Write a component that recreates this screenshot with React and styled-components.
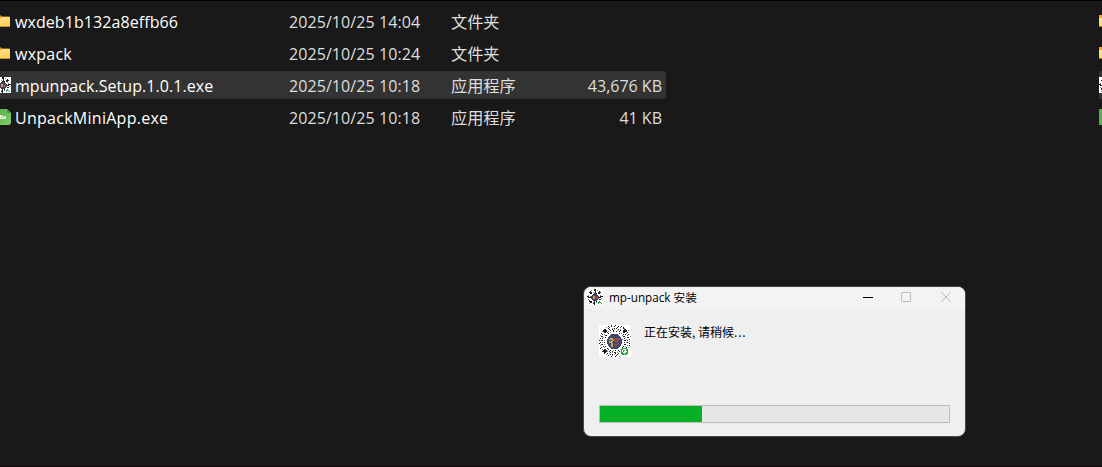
import React from "react";
import styled, { createGlobalStyle } from "styled-components";

const GlobalStyle = createGlobalStyle`
  * {
    box-sizing: border-box;
  }
  body {
    margin: 0;
    background: #191919;
    font-family: "Open Sans", "Noto Sans CJK SC", sans-serif;
    overflow: hidden;
  }
`;

const files = [
  { id: 1, icon: "folder", name: "wxdeb1b132a8effb66", date: "2025/10/25 14:04", type: "文件夹", size: "", spacing: "0.08px" },
  { id: 2, icon: "folder", name: "wxpack", date: "2025/10/25 10:24", type: "文件夹", size: "", spacing: "0.25px" },
  { id: 3, icon: "code", name: "mpunpack.Setup.1.0.1.exe", date: "2025/10/25 10:18", type: "应用程序", size: "43,676 KB", selected: true, spacing: "0.06px" },
  { id: 4, icon: "app", name: "UnpackMiniApp.exe", date: "2025/10/25 10:18", type: "应用程序", size: "41 KB", spacing: "0.27px" },
];

// one character per pixel, "." is left white
const codeLarge = [
  "............#...#...............",
  ".........#..#..#...#..#.........",
  ".......+..#.......#..+..#.......",
  ".........#...+.#.#......#+......",
  ".....##...#..#.+...#.+...##.....",
  "....####...#..#...+..#..####.+..",
  "...+####.+....#..#..#...####....",
  ".....##.#..+............##..#...",
  "..#......#..........#.+....+....",
  "...#.+......nnnnnnn.....#.#..#..",
  ".+....##...nnnnnnnnn...+....#...",
  "..##......nnnnnnnnnnn...##.....+",
  "....+.#..nnnnnnnnnnnnn....+.##..",
  ".#.#.....nnyyynnrrrrnn...#......",
  "........nnyyyynynrrrrnnn...+..#.",
  "#.##.+..nnnnnyynnnrrnnn..##.#...",
  "........nnyyyynnrrrnnnn.......+.",
  ".#.+.#..nnyyynnnrrnnnnn..#.+#...",
  "#.......nnnnyynnnnrrnnn.......#.",
  "..##.+...nnnyynnrrrnnn...##.....",
  ".+.......nnnyynnrrnnnn......+.#.",
  "....#.#...nnyynnnnnnn...#.+.....",
  "..#..+.....nnnnnnnnn...#...#.+..",
  ".#......#...nnnnnnn....ggggg....",
  "...+.##..#...........+gg...gg...",
  "....####...#..+.#..#..g.gg.gg...",
  "...#####+.#..#......#.g.g...g...",
  ".....##....#.+.##.+...gg...gg...",
  ".....#..#.+.....#..#..ggg.ggg...",
  ".......+...#.#.+..#....ggggg....",
  ".........#...+...#..............",
  "............#...#...+...........",
];

const codeSmall = [
  ".......##.......",
  "....+..##.+.....",
  "...#....#...#...",
  "..###.+.#..###..",
  "...##..###.##...",
  "......dddd......",
  ".+...dnnnnd..+..",
  "##.+dnyynrrd.###",
  ".###dnyynrrd##..",
  "....dnyynrrd..+.",
  ".+...dnnnnd.##..",
  "..#...dddd......",
  "..###..#.#..g...",
  "...##.+#.+.ggg..",
  "..+...##...g..g.",
  ".......#........",
];

const pixelColors = {
  "#": "#202020",
  "+": "#858585",
  n: "#414968",
  d: "#3c425b",
  y: "#cda356",
  r: "#a74650",
  g: "#22a846",
};

const PixelCode = ({ size, map }) => (
  <svg width={size} height={size} viewBox={`0 0 ${map.length} ${map.length}`} shapeRendering="crispEdges">
    <rect width={map.length} height={map.length} fill="#fff" />
    {map.map((line, y) =>
      line.split("").map((c, x) =>
        pixelColors[c] ? <rect key={`${x}-${y}`} x={x} y={y} width="1" height="1" fill={pixelColors[c]} /> : null
      )
    )}
  </svg>
);

const FolderIcon = () => (
  <svg width="16" height="16" viewBox="0 0 16 16">
    <defs>
      <linearGradient id="folder" x1="0" y1="0" x2="1" y2="1">
        <stop offset="0" stopColor="#ffe9a3" />
        <stop offset="1" stopColor="#ffc83c" />
      </linearGradient>
    </defs>
    <path d="M0 3a1 1 0 0 1 1-1h4l2 1.5h7a1 1 0 0 1 1 1V13H0z" fill="#e9a21a" />
    <path d="M0 5h6l2-1h6.200a.8.8 0 0 1 .8.8V13a1 1 0 0 1-1 1H1a1 1 0 0 1-1-1z" fill="url(#folder)" />
    <path d="M0 13.500h15" stroke="#a87918" strokeWidth="0.7" />
  </svg>
);

const AppIcon = () => (
  <svg width="16" height="16" viewBox="0 0 16 16">
    <defs>
      <linearGradient id="app" x1="0" y1="0" x2="1" y2="1">
        <stop offset="0" stopColor="#55b14d" />
        <stop offset="1" stopColor="#83cc69" />
      </linearGradient>
    </defs>
    <path d="M0 0h12l4 4v9a3 3 0 0 1-3 3H0z" fill="url(#app)" />
    <path d="M12 0l4 4h-3a1 1 0 0 1-1-1z" fill="#3c983d" />
    <path d="M4 10V8.500a2 2 0 0 1 4-1l1-.5.5 1 1-2 .5 4z" fill="#e5f5df" />
    <path d="M6.500 8v1M8.500 8v1" stroke="#62b957" strokeWidth="0.8" />
  </svg>
);

const FileIcon = ({ icon }) => {
  if (icon === "folder") return <FolderIcon />;
  if (icon === "code") return <PixelCode size={16} map={codeSmall} />;
  return <AppIcon />;
};

const App = () => {
  return (
    <>
      <GlobalStyle />
      <Desktop>
        <FileList>
          {files.map((file) => (
            <FileRow key={file.id} $selected={file.selected}>
              <IconCell>
                <FileIcon icon={file.icon} />
              </IconCell>
              <NameCell $spacing={file.spacing}>{file.name}</NameCell>
              <DateCell>{file.date}</DateCell>
              <TypeCell>{file.type}</TypeCell>
              <SizeCell>{file.size}</SizeCell>
            </FileRow>
          ))}
        </FileList>
        <NextPane>
          {files.map((file) => (
            <EdgeRow key={file.id} $selected={file.selected}>
              <EdgeIcon $kind={file.icon}>
                {file.icon === "code" && <PixelCode size={16} map={codeSmall} />}
              </EdgeIcon>
            </EdgeRow>
          ))}
        </NextPane>
        <Installer>
          <TitleBar>
            <PixelCode size={16} map={codeSmall} />
            <Title>mp-unpack 安装</Title>
            <WindowButtons>
              <svg width="10" height="10" viewBox="0 0 10 10">
                <path d="M0 5.500h10" stroke="#000" />
              </svg>
              <svg width="10" height="10" viewBox="0 0 10 10">
                <rect x="0.5" y="0.5" width="9" height="9" rx="0.6" fill="none" stroke="#bdbdbd" />
              </svg>
              <svg width="10" height="10" viewBox="0 0 10 10">
                <path d="M0 0l10 10M10 0L0 10" stroke="#bdbdbd" />
              </svg>
            </WindowButtons>
          </TitleBar>
          <Message>
            <PixelCode size={32} map={codeLarge} />
            <MessageText>
              正在安装, 请稍候<Dots>...</Dots>
            </MessageText>
          </Message>
          <Progress>
            <ProgressFill style={{ width: "102px" }} />
          </Progress>
        </Installer>
      </Desktop>
    </>
  );
};

export default App;

const Desktop = styled.div`
  position: relative;
  display: flex;
  justify-content: space-between;
  width: 1102px;
  height: 467px;
  overflow: hidden;
  background: #191919;
  border-top: 1px solid #000;
  border-bottom: 1px solid #120d0e;
`;

const FileList = styled.div`
  display: flex;
  flex-direction: column;
  gap: 4px;
  width: 666px;
  padding-top: 6px;
`;

const FileRow = styled.div`
  display: grid;
  grid-template-columns: 15px 274px 162px 120px 91px;
  align-items: center;
  height: 28px;
  border: solid ${(props) => (props.$selected ? "#2e2e2e" : "transparent")};
  border-width: 1px 1px 1px 0;
  border-radius: 0 2px 2px 0;
  background: ${(props) => (props.$selected ? "#333" : "transparent")};
  font-size: 16px;
  line-height: 24px;
  white-space: nowrap;
`;

const IconCell = styled.div`
  display: flex;
  justify-content: flex-end;
  width: 11px;
  overflow: hidden;

  svg {
    flex: none;
  }
`;

const Cell = styled.span`
  padding-top: 2px;
  color: #dedede;
`;

const NameCell = styled(Cell)`
  color: #fff;
  letter-spacing: ${(props) => props.$spacing};
`;

const DateCell = styled(Cell)`
  letter-spacing: 0.08px;
`;

const TypeCell = styled(Cell)`
  padding-top: 0;
  font-family: "Noto Sans CJK SC", sans-serif;
  font-size: 16.2px;
`;

const SizeCell = styled(Cell)`
  text-align: right;
`;

const NextPane = styled.div`
  display: flex;
  flex-direction: column;
  gap: 4px;
  width: 3px;
  padding-top: 6px;
  overflow: hidden;
`;

const EdgeRow = styled.div`
  display: flex;
  align-items: center;
  height: 28px;
  background: ${(props) => (props.$selected ? "#333" : "transparent")};
`;

const edgeFills = {
  folder: "linear-gradient(#f3a40d 0 3px, #ffe08a 3px 5px, #ffd05a 11px, #a87918 11px)",
  app: "linear-gradient(90deg, #53ae4b, #6cbd58)",
  code: "#fff",
};

const EdgeIcon = styled.div`
  flex: none;
  width: 16px;
  height: ${(props) => (props.$kind === "folder" ? "12px" : "16px")};
  background: ${(props) => edgeFills[props.$kind]};

  svg {
    display: block;
  }
`;

const Installer = styled.div`
  position: absolute;
  left: 583px;
  top: 285px;
  display: flex;
  flex-direction: column;
  width: 383px;
  height: 151px;
  border: 1px solid #454545;
  border-radius: 8px;
  background: #efefef;
  overflow: hidden;
`;

const TitleBar = styled.div`
  display: flex;
  align-items: center;
  height: 22px;
  padding: 0 14px 2px 3px;
  background: #f3f3f3;
`;

const Title = styled.span`
  margin-left: 6px;
  color: #000;
  font-size: 11.7px;
  line-height: 20px;
`;

const WindowButtons = styled.div`
  display: grid;
  grid-template-columns: 38px 40px 10px;
  margin-left: auto;
`;

const Message = styled.div`
  display: flex;
  align-items: flex-start;
  gap: 13px;
  padding: 16px 15px 0;
`;

const MessageText = styled.span`
  margin-top: -1px;
  color: #000;
  font-family: "Noto Sans CJK SC", sans-serif;
  font-size: 12px;
  line-height: 16px;
`;

const Dots = styled.span`
  letter-spacing: 0.8px;
`;

const Progress = styled.div`
  width: 351px;
  height: 18px;
  margin: auto 0 13px 15px;
  border: 1px solid #bcbcbc;
  background: #e6e6e6;
`;

const ProgressFill = styled.div`
  height: 100%;
  background: #06b025;
`;
